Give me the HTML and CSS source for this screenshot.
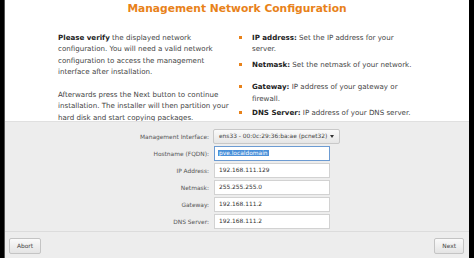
FILE: index.html
```html
<!DOCTYPE html>
<html lang="en">
<head>
    <meta charset="UTF-8">
    <title>Management Network Configuration</title>
    <link rel="stylesheet" href="styles.css">
</head>
<body>
    <div class="window">
        <h1 class="title">Management Network Configuration</h1>

        <div class="info">
            <div class="intro">
                <p><b>Please verify</b> the displayed network<br>configuration. You will need a valid network<br>configuration to access the management<br>interface after installation.</p>
                <p>Afterwards press the Next button to continue<br>installation. The installer will then partition your<br>hard disk and start copying packages.</p>
            </div>
            <ul class="hints">
                <li><b>IP address:</b> Set the IP address for your<br>server.</li>
                <li><b>Netmask:</b> Set the netmask of your network.</li>
                <li><b>Gateway:</b> IP address of your gateway or<br>firewall.</li>
                <li><b>DNS Server:</b> IP address of your DNS server.</li>
            </ul>
        </div>

        <div class="lower">
            <div class="form">
                <div class="row">
                    <label>Management Interface:</label>
                    <div class="combo">ens33 - 00:0c:29:36:ba:ae (pcnet32) <span class="arrow"></span></div>
                </div>
                <div class="row">
                    <label>Hostname (FQDN):</label>
                    <div class="field focus"><span class="sel">pve.localdomain</span></div>
                </div>
                <div class="row">
                    <label>IP Address:</label>
                    <div class="field">192.168.111.129</div>
                </div>
                <div class="row">
                    <label>Netmask:</label>
                    <div class="field">255.255.255.0</div>
                </div>
                <div class="row">
                    <label>Gateway:</label>
                    <div class="field">192.168.111.2</div>
                </div>
                <div class="row">
                    <label>DNS Server:</label>
                    <div class="field">192.168.111.2</div>
                </div>
            </div>
            <div class="buttons">
                <button class="btn abort">Abort</button>
                <button class="btn next">Next</button>
            </div>
        </div>
    </div>
</body>
</html>
```

FILE: styles.css
```css
html, body {
    margin: 0;
    padding: 0;
    background: #000;
}
body {
    font-family: 'DejaVu Sans', sans-serif;
    font-size: 7.1px;
    color: #444;
}
.window {
    margin-left: 4px;
    width: 465px;
    height: 258px;
    background: #fff;
    display: flex;
    flex-direction: column;
    border-left: 1px solid #555;
    box-sizing: border-box;
}
.title {
    margin: 0;
    padding-top: 2px;
    height: 32px;
    box-sizing: border-box;
    text-align: center;
    font-size: 10.7px;
    line-height: 13px;
    color: #e8821a;
    font-weight: bold;
}
.info {
    display: flex;
    height: 89px;
    box-sizing: border-box;
    white-space: nowrap;
}
.intro {
    width: 167px;
    margin-left: 53px;
    line-height: 11.4px;
}
.intro p {
    margin: 0 0 11.4px 0;
}
.intro b, .hints b {
    color: #222;
}
.hints {
    margin: 0 0 0 15px;
    padding: 0 0 0 12px;
    width: 160px;
    line-height: 11.4px;
    list-style: none;
}
.hints li {
    position: relative;
    margin-bottom: 4px;
}
.hints li:nth-child(2) {
    margin-bottom: 11px;
}
.hints li:nth-child(3) {
    margin-bottom: 2.5px;
}
.hints li::before {
    content: '';
    position: absolute;
    left: -13px;
    top: 4px;
    width: 3px;
    height: 3px;
    background: #e8821a;
}
.lower {
    flex: 1;
    background: #ededed;
    border-top: 1px solid #e0e0e0;
    display: flex;
    flex-direction: column;
    font-size: 5.9px;
}
.form {
    display: flex;
    flex-direction: column;
    gap: 2px;
    padding-top: 7px;
    height: 110px;
    box-sizing: border-box;
    border-bottom: 1px solid #dcdcdc;
}
.row {
    display: flex;
    align-items: center;
    height: 15px;
}
.row label {
    width: 209px;
    padding-right: 5px;
    box-sizing: border-box;
    text-align: right;
    color: #555;
}
.field {
    width: 116px;
    height: 15px;
    box-sizing: border-box;
    background: #fff;
    border: 1px solid #d2d2d2;
    padding-left: 4px;
    line-height: 13px;
    color: #333;
}
.field.focus {
    border-color: #6c9bd2;
}
.sel {
    background: #4a90d9;
    color: #fff;
    padding: 0 1px;
    margin-left: -1px;
}
.combo {
    height: 15px;
    box-sizing: border-box;
    padding: 0 5px;
    border: 1px solid #c8c8c8;
    border-radius: 2px;
    background: linear-gradient(#fafafa, #e6e6e6);
    line-height: 13px;
    color: #444;
    display: flex;
    align-items: center;
    gap: 3px;
    margin-left: -1px;
}
.arrow {
    width: 0;
    height: 0;
    border-left: 2.5px solid transparent;
    border-right: 2.5px solid transparent;
    border-top: 3px solid #333;
}
.buttons {
    display: flex;
    justify-content: space-between;
    padding: 6px 5px 0 4px;
}
.btn {
    font-family: 'DejaVu Sans', sans-serif;
    font-size: 5.9px;
    color: #444;
    height: 16px;
    padding: 0 7px;
    border: 1px solid #c4c4c4;
    border-radius: 2px;
    background: linear-gradient(#fafafa, #e4e4e4);
}
```
